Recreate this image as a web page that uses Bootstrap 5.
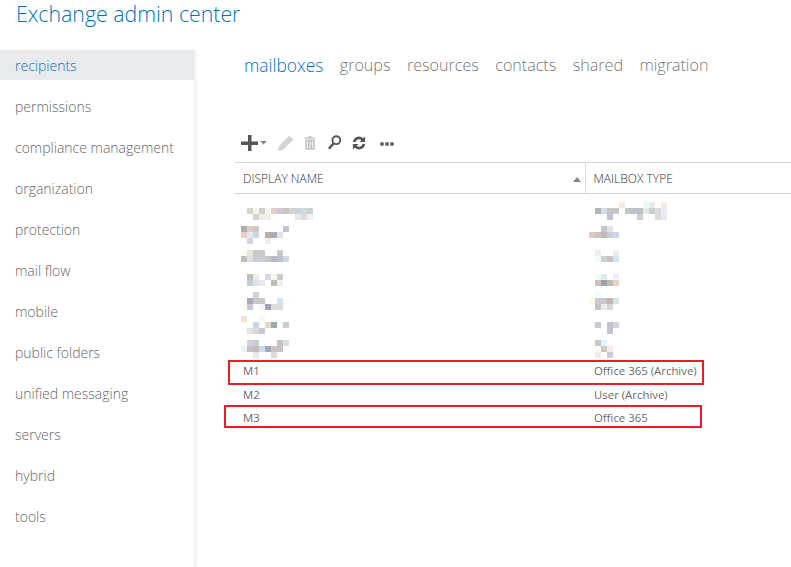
<!DOCTYPE html>
<html lang="en">
<head>
    <meta charset="UTF-8">
    <meta name="viewport" content="width=device-width, initial-scale=1.0">
    <title>Exchange admin center</title>
    <link href="https://cdn.jsdelivr.net/npm/bootstrap@5.3.3/dist/css/bootstrap.min.css" rel="stylesheet">
    <style>
        html, body { height: 100%; overflow: hidden; }
        body { font-family: "Open Sans", "Liberation Sans", sans-serif; font-weight: 300; color: #666; background: #fff; }
        .eac-title { font-size: 21.3px; font-weight: 300; color: #0072c6; margin: 0; padding: 1px 0 0 16px; height: 50px; line-height: 26px; }
        .eac-body { height: 517px; }
        .eac-side { width: 195px; flex: none; border-right: 1px solid #f0f0f0; box-shadow: 2px 0 3px rgba(0,0,0,.05); }
        .eac-side .list-group-item { border: 0; padding: 1px 0 0 15px; height: 30px; line-height: 30px; margin-bottom: 11px; font-size: 14px; color: #666; background: none; border-radius: 0; }
        .eac-side .list-group-item.active { background: #e9eaec; color: #0072c6; }
        .eac-main { padding-left: 40px; min-width: 0; flex: 1; }
        .eac-tabs { gap: 16.5px; height: 30px; font-size: 16.1px; line-height: 30px; padding-left: 9px; }
        .eac-tabs .nav-link { padding: 0; color: #777; }
        .eac-tabs .nav-link.active { color: #0072c6; font-size: 17.4px; }
        .eac-tools { height: 50px; margin-top: 32px; padding: 22px 0 0 6px; gap: 9px; }
        .eac-tools .tool-find { margin-left: 2px; }
        .eac-tools .tool-more { margin-left: 3px; }
        .eac-table { margin: 0; table-layout: fixed; width: 556px; }
        .eac-table.table > :not(caption) > * > * { padding: 0 0 0 8px; border: 0; background: none; color: #6a6a6a; font-size: 11.4px; font-weight: 400; box-shadow: none; }
        .eac-table thead tr { border-top: 1px solid #d0d4d8; border-bottom: 1px solid #d0d4d8; height: 31px; }
        .eac-table.table > thead > tr > th { font-weight: 300; color: #333; font-size: 12px; vertical-align: middle; padding-top: 2px; }
        .eac-table.table > thead > tr > th + th { border-left: 1px solid #d8dadc; }
        .eac-table tbody td { height: 23.4px; vertical-align: middle; }
        .eac-table.table > tbody > tr > td + td { padding-left: 9px; }
        .eac-table.table > tbody > .blur-row > td { height: 165px; vertical-align: top; padding: 0; }
        .eac-table svg { display: block; }
        .sort-up { width: 0; height: 0; border: 4px solid transparent; border-top: 0; border-bottom: 5px solid #8a7f95; margin-right: 4px; }
        .mark { position: absolute; border: 2px solid #ed1c24; background: none; padding: 0; }
        .mark-a { left: 228px; top: 360px; width: 476px; height: 25px; }
        .mark-b { left: 224px; top: 405px; width: 478px; height: 23px; }
    </style>
</head>
<body>
    <h1 class="eac-title">Exchange admin center</h1>
    <div class="d-flex eac-body">
        <div class="eac-side">
            <div class="list-group">
                <a class="list-group-item active">recipients</a>
                <a class="list-group-item">permissions</a>
                <a class="list-group-item">compliance management</a>
                <a class="list-group-item">organization</a>
                <a class="list-group-item">protection</a>
                <a class="list-group-item">mail flow</a>
                <a class="list-group-item">mobile</a>
                <a class="list-group-item">public folders</a>
                <a class="list-group-item">unified messaging</a>
                <a class="list-group-item">servers</a>
                <a class="list-group-item">hybrid</a>
                <a class="list-group-item">tools</a>
            </div>
        </div>
        <div class="eac-main">
            <ul class="nav eac-tabs">
                <li class="nav-item"><a class="nav-link active">mailboxes</a></li>
                <li class="nav-item"><a class="nav-link">groups</a></li>
                <li class="nav-item"><a class="nav-link">resources</a></li>
                <li class="nav-item"><a class="nav-link">contacts</a></li>
                <li class="nav-item"><a class="nav-link">shared</a></li>
                <li class="nav-item"><a class="nav-link">migration</a></li>
            </ul>
            <div class="d-flex align-items-start eac-tools">
                <svg width="27" height="18" viewBox="0 0 27 18"><path d="M7 1h3.500v6.500H17V11h-6.500v6H7v-6H0V7.500h7z" fill="#555"/><path d="M19 7h7l-3.500 3.500z" fill="#888"/></svg>
                <svg width="18" height="18" viewBox="0 0 18 18"><path d="M12.500 1.500l4 4L6 16l-5 1 1-5z" fill="#d4d4d4"/></svg>
                <svg width="12" height="18" viewBox="0 0 14 18"><path d="M5 1h4v1.500h4.500V4H.5V2.500H5zM1.500 5h11v12h-11z" fill="#c4c4c4"/><path d="M4 7v8M7 7v8M10 7v8" stroke="#fff"/></svg>
                <svg width="15" height="18" viewBox="0 0 16 18" class="tool-find"><circle cx="10" cy="6" r="4.200" fill="none" stroke="#555" stroke-width="2"/><path d="M7 9.500L2 15" stroke="#555" stroke-width="2.600"/></svg>
                <svg width="16" height="18" viewBox="0 0 17 18"><path d="M2 8a6.500 6.500 0 0 1 11-4l2-2v6h-6l2-2a3.800 3.800 0 0 0-6.200 2zM15 10a6.500 6.500 0 0 1-11 4l-2 2v-6h6l-2 2a3.800 3.800 0 0 0 6.200-2z" fill="#555"/></svg>
                <svg width="16" height="18" viewBox="0 0 16 18" class="tool-more"><circle cx="3" cy="10" r="2" fill="#666"/><circle cx="8" cy="10" r="2" fill="#666"/><circle cx="13" cy="10" r="2" fill="#666"/></svg>
            </div>
            <table class="table eac-table">
                <colgroup><col style="width:350px"><col></colgroup>
                <thead>
                    <tr>
                        <th><div class="d-flex align-items-center justify-content-between">DISPLAY NAME<span class="sort-up"></span></div></th>
                        <th>MAILBOX TYPE</th>
                    </tr>
                </thead>
                <tbody>
                    <tr class="blur-row">
                        <td><svg id="blurName" width="90" height="165"></svg></td>
                        <td><svg id="blurType" width="100" height="165"></svg></td>
                    </tr>
                    <tr><td>M1</td><td>Office 365 (Archive)</td></tr>
                    <tr><td>M2</td><td>User (Archive)</td></tr>
                    <tr><td>M3</td><td>Office 365</td></tr>
                </tbody>
            </table>
        </div>
    </div>
    <div class="mark mark-a"></div>
    <div class="mark mark-b"></div>

    <script src="https://cdn.jsdelivr.net/npm/bootstrap@5.3.3/dist/js/bootstrap.bundle.min.js"></script>
    <script>
        // pixelated names: row number, then column:colour pairs. Each block is 6x6
        const blurName = {
            0: '1:d8d6cc 2:f8f4e4 3:cfcfcf 4:f8f2e8 5:e2ced2 6:cbcad0 7:c8c4c0 8:d5d0d2 9:ccd2d8 10:c8dce0 11:cfcfcf',
            1: '2:d8d4cc 3:eeeeea 4:eef0e8 9:e4ece8 10:e4dcd4 11:eef2f8',
            3: '0:b0acb0 1:e0ccc4 2:ccc8cc 7:c0c4d0',
            4: '0:e8d0c4 1:e4e8f0 2:d0d4dc 4:b8b0a8 5:a8acb8 6:e0e4ee',
            5: '1:d0d4dc 4:e8eef4',
            7: '0:fdfbf0 1:ece4dc 2:ccc8c8 3:ccc8c8 6:d0c8c8',
            8: '0:c4bcb4 1:dcdee0 2:c8ccd4 3:c8ccd4 4:c4c8c4 5:b8b8c0 6:b4c4d8 7:d0d8e0',
            11: '1:c4c0b8 2:ececec 4:d4d8e4 5:fbf6f0 6:cccccc',
            12: '1:c8ccd8 2:dce0e8 3:e4e8f0 5:c0bcb8 6:f0f0ee',
            14: '2:ccd0d8',
            15: '1:a8a8b8 2:c8c8c8 3:ccc8c8 6:d0e4f4 7:f8fcff',
            16: '0:fdfdf4 1:c4c8d8 3:f0f6fc 4:a0a4b4 5:dcdcdc 6:dcdcdc',
            18: '0:f0e0d8 3:fdf6f0',
            19: '2:c8d8ec 4:e4d8cc 5:a0a8b8 7:cccccc',
            20: '1:e4e4e4 2:e0d8d0 3:c4c8d8',
            22: '1:d0d4dc 2:c8ccd4 6:c8c4c4 7:d8dce4',
            23: '0:e8f6fc 1:c8c0c0 2:c4bcbc 3:c8dcec 4:a0a8bc 5:ccc4c4 6:c8c4c4',
            24: '2:e4e8f0 5:dcdcdc'
        };
        const blurType = {
            0: '5:f4ece4 9:e8fbfb 10:ece8e8 12:f4ecdc',
            1: '1:b4b4b8 2:d4dce4 3:c8c8c0 4:c0c8cc 6:c0c8c8 7:bcc0cc 8:c0c0c8 9:e0ece0 10:ccccd4 11:dcdcdc 12:e8eef8',
            2: '3:c4c4d0 8:d4ccd0 11:e0dcd4 12:e8e8ec',
            4: '2:c0c4d4 3:e0e4f0',
            5: '0:dcc8cc 1:ccc4c4 2:c0b8b4 3:ccccd4 4:c8d8ec',
            8: '1:f4ece8 4:f0ecec',
            9: '1:ecfcfc 2:ccd0d4 3:ccc0c0 4:d0e4f4',
            12: '1:ecfcfc 2:e0ecec 4:ecf0f8',
            13: '1:ccc4bc 2:a0a0a8 3:c0bcb4 4:e0d4c8',
            15: '1:f0fcfc',
            16: '0:fcfce4 1:ccc8d4 2:c8c8c8 3:c0b8ac 4:dce0e8',
            17: '1:c4c4c4 2:e8ecec 3:d8d8d8',
            20: '1:c8c8d8 3:c0c4d4 4:d0d4e0',
            21: '3:c4c4d0',
            23: '1:c8c8c8 2:e4f4fc',
            24: '1:fcfcf4 2:d0c8c4 3:f4ece8',
            25: '1:f4ece4 3:ccccd8'
        };

        function pintar(id, dados, x0, y0) {
            let html = '';
            Object.entries(dados).forEach(([linha, celulas]) => {
                celulas.split(' ').forEach((c) => {
                    const [col, cor] = c.split(':');
                    html += `<rect x="${x0 + col * 6}" y="${y0 + linha * 6}" width="6" height="6" fill="#${cor}"/>`;
                });
            });
            document.getElementById(id).innerHTML = html;
        }

        pintar('blurName', blurName, 6, 14);
        pintar('blurType', blurType, 4, 8);
    </script>
</body>
</html>
